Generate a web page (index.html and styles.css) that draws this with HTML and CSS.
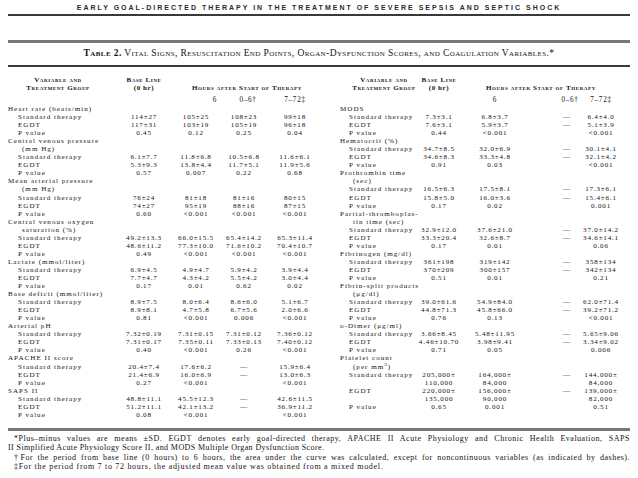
FILE: index.html
```html
<!DOCTYPE html>
<html>
<head>
<meta charset="utf-8">
<title>Table 2</title>
<link rel="stylesheet" href="styles.css">
</head>
<body>
<div class="page">
  <div class="running">Early Goal-Directed Therapy in the Treatment of Severe Sepsis and Septic Shock</div>
  <div class="rule-heavy"></div>
  <div class="caption"><b>Table 2.</b> Vital Signs, Resuscitation End Points, Organ-Dysfunction Scores, and Coagulation Variables.*</div>

  <div class="tables">
    <div class="tbl tleft">
      <div class="thead">
        <div class="h-var">Variable and<br>Treatment Group</div>
        <div class="h-base">Base Line<br><span class="nc">(0 hr)</span></div>
        <div class="h-hours">Hours after Start of Therapy</div>
        <div class="h-sub h6">6</div>
        <div class="h-sub h06">0–6†</div>
        <div class="h-sub h772">7–72‡</div>
      </div>
      <div class="tbody">
        <div class="row"><span class="lab grp">Heart rate (beats/min)</span></div>
        <div class="row"><span class="lab sub">Standard therapy</span><span>114±27</span><span>105±25</span><span>108±23</span><span>99±18</span></div>
        <div class="row"><span class="lab sub">EGDT</span><span>117±31</span><span>103±19</span><span>105±19</span><span>96±18</span></div>
        <div class="row"><span class="lab sub">P value</span><span>0.45</span><span>0.12</span><span>0.25</span><span>0.04</span></div>

        <div class="row"><span class="lab grp">Central venous pressure</span></div>
        <div class="row"><span class="lab cont">(mm Hg)</span></div>
        <div class="row"><span class="lab sub">Standard therapy</span><span>6.1±7.7</span><span>11.8±6.8</span><span>10.5±6.8</span><span>11.6±6.1</span></div>
        <div class="row"><span class="lab sub">EGDT</span><span>5.3±9.3</span><span>13.8±4.4</span><span>11.7±5.1</span><span>11.9±5.6</span></div>
        <div class="row"><span class="lab sub">P value</span><span>0.57</span><span>0.007</span><span>0.22</span><span>0.68</span></div>

        <div class="row"><span class="lab grp">Mean arterial pressure</span></div>
        <div class="row"><span class="lab cont">(mm Hg)</span></div>
        <div class="row"><span class="lab sub">Standard therapy</span><span>76±24</span><span>81±18</span><span>81±16</span><span>80±15</span></div>
        <div class="row"><span class="lab sub">EGDT</span><span>74±27</span><span>95±19</span><span>88±16</span><span>87±15</span></div>
        <div class="row"><span class="lab sub">P value</span><span>0.60</span><span>&lt;0.001</span><span>&lt;0.001</span><span>&lt;0.001</span></div>

        <div class="row"><span class="lab grp">Central venous oxygen</span></div>
        <div class="row"><span class="lab cont">saturation (%)</span></div>
        <div class="row"><span class="lab sub">Standard therapy</span><span>49.2±13.3</span><span>66.0±15.5</span><span>65.4±14.2</span><span>65.3±11.4</span></div>
        <div class="row"><span class="lab sub">EGDT</span><span>48.6±11.2</span><span>77.3±10.0</span><span>71.6±10.2</span><span>70.4±10.7</span></div>
        <div class="row"><span class="lab sub">P value</span><span>0.49</span><span>&lt;0.001</span><span>&lt;0.001</span><span>&lt;0.001</span></div>

        <div class="row"><span class="lab grp">Lactate (mmol/liter)</span></div>
        <div class="row"><span class="lab sub">Standard therapy</span><span>6.9±4.5</span><span>4.9±4.7</span><span>5.9±4.2</span><span>3.9±4.4</span></div>
        <div class="row"><span class="lab sub">EGDT</span><span>7.7±4.7</span><span>4.3±4.2</span><span>5.5±4.2</span><span>3.0±4.4</span></div>
        <div class="row"><span class="lab sub">P value</span><span>0.17</span><span>0.01</span><span>0.62</span><span>0.02</span></div>

        <div class="row"><span class="lab grp">Base deficit (mmol/liter)</span></div>
        <div class="row"><span class="lab sub">Standard therapy</span><span>8.9±7.5</span><span>8.0±6.4</span><span>8.6±6.0</span><span>5.1±6.7</span></div>
        <div class="row"><span class="lab sub">EGDT</span><span>8.9±8.1</span><span>4.7±5.8</span><span>6.7±5.6</span><span>2.0±6.6</span></div>
        <div class="row"><span class="lab sub">P value</span><span>0.81</span><span>&lt;0.001</span><span>0.006</span><span>&lt;0.001</span></div>

        <div class="row"><span class="lab grp">Arterial pH</span></div>
        <div class="row"><span class="lab sub">Standard therapy</span><span>7.32±0.19</span><span>7.31±0.15</span><span>7.31±0.12</span><span>7.36±0.12</span></div>
        <div class="row"><span class="lab sub">EGDT</span><span>7.31±0.17</span><span>7.35±0.11</span><span>7.33±0.13</span><span>7.40±0.12</span></div>
        <div class="row"><span class="lab sub">P value</span><span>0.40</span><span>&lt;0.001</span><span>0.26</span><span>&lt;0.001</span></div>

        <div class="row"><span class="lab grp">APACHE II score</span></div>
        <div class="row"><span class="lab sub">Standard therapy</span><span>20.4±7.4</span><span>17.6±6.2</span><span>—</span><span>15.9±6.4</span></div>
        <div class="row"><span class="lab sub">EGDT</span><span>21.4±6.9</span><span>16.0±6.9</span><span>—</span><span>13.0±6.3</span></div>
        <div class="row"><span class="lab sub">P value</span><span>0.27</span><span>&lt;0.001</span><span></span><span>&lt;0.001</span></div>

        <div class="row"><span class="lab grp">SAPS II</span></div>
        <div class="row"><span class="lab sub">Standard therapy</span><span>48.8±11.1</span><span>45.5±12.3</span><span>—</span><span>42.6±11.5</span></div>
        <div class="row"><span class="lab sub">EGDT</span><span>51.2±11.1</span><span>42.1±13.2</span><span>—</span><span>36.9±11.2</span></div>
        <div class="row"><span class="lab sub">P value</span><span>0.08</span><span>&lt;0.001</span><span></span><span>&lt;0.001</span></div>
      </div>
    </div>

    <div class="tbl tright">
      <div class="thead">
        <div class="h-var">Variable and<br>Treatment Group</div>
        <div class="h-base">Base Line<br><span class="nc">(0 hr)</span></div>
        <div class="h-hours">Hours after Start of Therapy</div>
        <div class="h-sub h6">6</div>
        <div class="h-sub h06">0–6†</div>
        <div class="h-sub h772">7–72‡</div>
      </div>
      <div class="tbody">
        <div class="row"><span class="lab grp">MODS</span></div>
        <div class="row"><span class="lab sub">Standard therapy</span><span>7.3±3.1</span><span>6.8±3.7</span><span>—</span><span>6.4±4.0</span></div>
        <div class="row"><span class="lab sub">EGDT</span><span>7.6±3.1</span><span>5.9±3.7</span><span>—</span><span>5.1±3.9</span></div>
        <div class="row"><span class="lab sub">P value</span><span>0.44</span><span>&lt;0.001</span><span></span><span>&lt;0.001</span></div>

        <div class="row"><span class="lab grp">Hematocrit (%)</span></div>
        <div class="row"><span class="lab sub">Standard therapy</span><span>34.7±8.5</span><span>32.0±6.9</span><span>—</span><span>30.1±4.1</span></div>
        <div class="row"><span class="lab sub">EGDT</span><span>34.6±8.3</span><span>33.3±4.8</span><span>—</span><span>32.1±4.2</span></div>
        <div class="row"><span class="lab sub">P value</span><span>0.91</span><span>0.03</span><span></span><span>&lt;0.001</span></div>

        <div class="row"><span class="lab grp">Prothrombin time</span></div>
        <div class="row"><span class="lab cont">(sec)</span></div>
        <div class="row"><span class="lab sub">Standard therapy</span><span>16.5±6.3</span><span>17.5±8.1</span><span>—</span><span>17.3±6.1</span></div>
        <div class="row"><span class="lab sub">EGDT</span><span>15.8±5.0</span><span>16.0±3.6</span><span>—</span><span>15.4±6.1</span></div>
        <div class="row"><span class="lab sub">P value</span><span>0.17</span><span>0.02</span><span></span><span>0.001</span></div>

        <div class="row"><span class="lab grp">Partial-thromboplas-</span></div>
        <div class="row"><span class="lab cont">tin time (sec)</span></div>
        <div class="row"><span class="lab sub">Standard therapy</span><span>32.9±12.0</span><span>37.6±21.0</span><span>—</span><span>37.0±14.2</span></div>
        <div class="row"><span class="lab sub">EGDT</span><span>33.3±20.4</span><span>32.6±8.7</span><span>—</span><span>34.6±14.1</span></div>
        <div class="row"><span class="lab sub">P value</span><span>0.17</span><span>0.01</span><span></span><span>0.06</span></div>

        <div class="row"><span class="lab grp">Fibrinogen (mg/dl)</span></div>
        <div class="row"><span class="lab sub">Standard therapy</span><span>361±198</span><span>319±142</span><span>—</span><span>358±134</span></div>
        <div class="row"><span class="lab sub">EGDT</span><span>370±209</span><span>300±157</span><span>—</span><span>342±134</span></div>
        <div class="row"><span class="lab sub">P value</span><span>0.51</span><span>0.01</span><span></span><span>0.21</span></div>

        <div class="row"><span class="lab grp">Fibrin-split products</span></div>
        <div class="row"><span class="lab cont">(μg/dl)</span></div>
        <div class="row"><span class="lab sub">Standard therapy</span><span>39.0±61.6</span><span>54.9±84.0</span><span>—</span><span>62.0±71.4</span></div>
        <div class="row"><span class="lab sub">EGDT</span><span>44.8±71.3</span><span>45.8±66.0</span><span>—</span><span>39.2±71.2</span></div>
        <div class="row"><span class="lab sub">P value</span><span>0.76</span><span>0.13</span><span></span><span>&lt;0.001</span></div>

        <div class="row"><span class="lab grp"><span class="sc">d</span>-Dimer (μg/ml)</span></div>
        <div class="row"><span class="lab sub">Standard therapy</span><span>3.66±8.45</span><span>5.48±11.95</span><span>—</span><span>5.65±9.06</span></div>
        <div class="row"><span class="lab sub">EGDT</span><span>4.46±10.70</span><span>3.98±9.41</span><span>—</span><span>3.34±9.02</span></div>
        <div class="row"><span class="lab sub">P value</span><span>0.71</span><span>0.05</span><span></span><span>0.006</span></div>

        <div class="row"><span class="lab grp">Platelet count</span></div>
        <div class="row"><span class="lab cont">(per mm<sup>3</sup>)</span></div>
        <div class="row"><span class="lab sub">Standard therapy</span><span>205,000±</span><span>164,000±</span><span>—</span><span>144,000±</span></div>
        <div class="row"><span class="lab"></span><span>110,000</span><span>84,000</span><span></span><span>84,000</span></div>
        <div class="row"><span class="lab sub">EGDT</span><span>220,000±</span><span>156,000±</span><span>—</span><span>139,000±</span></div>
        <div class="row"><span class="lab"></span><span>135,000</span><span>90,000</span><span></span><span>82,000</span></div>
        <div class="row"><span class="lab sub">P value</span><span>0.65</span><span>0.001</span><span></span><span>0.51</span></div>
      </div>
    </div>
  </div>

  <div class="rule-heavy bottom"></div>

  <div class="notes">
    <p class="jl ind n1">*Plus–minus values are means ±SD. EGDT denotes early goal-directed therapy, APACHE II Acute Physiology and Chronic Health Evaluation, SAPS</p>
    <p class="n2">II Simplified Acute Physiology Score II, and MODS Multiple Organ Dysfunction Score.</p>
    <p class="jl ind gap n3">†For the period from base line (0 hours) to 6 hours, the area under the curve was calculated, except for noncontinuous variables (as indicated by dashes).</p>
    <p class="ind n4">‡For the period from 7 to 72 hours, the adjusted mean value was obtained from a mixed model.</p>
  </div>
</div>
</body>
</html>
```

FILE: styles.css
```css
html, body {
  margin: 0;
  padding: 0;
  background: #ffffff;
}

body {
  width: 638px;
  height: 478px;
  overflow: hidden;
  color: #141414;
  font-family: "Liberation Serif", "Times New Roman", serif;
}

.page {
  padding: 0 8px;
}

.running {
  font-family: "Liberation Sans", Arial, sans-serif;
  font-weight: bold;
  font-size: 7px;
  line-height: 9px;
  letter-spacing: 2px;
  text-transform: uppercase;
  text-align: center;
  color: #2a2a2a;
  padding-top: 3px;
  padding-bottom: 2px;
  border-bottom: 2px solid #3a3a3a;
}

.rule-heavy {
  height: 3px;
  background: #777777;
  margin-top: 24px;
}

.rule-heavy.bottom {
  margin-top: 9px;
}

.caption {
  font-size: 9.5px;
  line-height: 12px;
  font-variant: small-caps;
  letter-spacing: 0.4px;
  text-align: center;
  margin-top: 4px;
  padding-bottom: 6px;
  border-bottom: 2px solid #3a3a3a;
}

.tables {
  display: flex;
}

.tleft {
  width: 316px;
  margin-right: 16px;
  --cols: 110px 52px 52px 44px 58px;
}

.tright {
  width: 282px;
  --cols: 78px 42px 70px 50px 42px;
}

.thead {
  display: grid;
  grid-template-columns: var(--cols);
  grid-template-rows: 8px 8px 8px;
  padding-top: 9px;
  font-size: 7px;
  line-height: 8px;
  font-weight: bold;
  font-variant: small-caps;
  letter-spacing: 0.6px;
  text-align: center;
  white-space: nowrap;
}

.h-var {
  grid-column: 1;
  grid-row: 1 / 3;
}

.tleft .h-var {
  padding-right: 10px;
}

.tright .h-var {
  padding-left: 10px;
}

.h-base {
  grid-column: 2;
  grid-row: 1 / 3;
}

.nc {
  font-variant: normal;
}

.h-hours {
  grid-column: 3 / 6;
  grid-row: 2;
}

.h-sub {
  grid-row: 3;
  margin-top: 4px;
  font-weight: normal;
  font-variant: normal;
  font-size: 7.2px;
  letter-spacing: 0.7px;
}

.h6 { grid-column: 3; }
.h06 { grid-column: 4; }
.h772 { grid-column: 5; }

.tleft .h6 { padding-left: 38px; }
.tleft .h06 { padding-left: 8px; }
.tright .h06 { padding-left: 30px; }

.tbody {
  padding-top: 5px;
}

.row {
  display: grid;
  grid-template-columns: var(--cols);
  height: 8.05px;
  font-size: 7.1px;
  line-height: 8.05px;
  letter-spacing: 0.8px;
  white-space: nowrap;
}

.row > span {
  text-align: center;
}

.row > .lab {
  text-align: left;
  letter-spacing: 1px;
}

.lab.sub {
  padding-left: 10px;
}

.lab.cont {
  padding-left: 14px;
}

.tright .lab.sub {
  padding-left: 9px;
}

.tright .lab.cont {
  padding-left: 13px;
}

.tright .row > span:nth-child(4) {
  padding-left: 24px;
}

.sc {
  font-variant: small-caps;
}

sup {
  font-size: 5px;
  line-height: 0;
  vertical-align: 3px;
}

.notes {
  margin-top: 3px;
  font-size: 8px;
  line-height: 9px;
  letter-spacing: 0.5px;
}

.notes p {
  margin: 0;
  white-space: normal;
}

.notes .ind {
  text-indent: 6px;
}

.notes .jl {
  text-align: justify;
  text-align-last: justify;
}

.notes .gap {
  margin-top: 1px;
}

.notes .n2 {
  letter-spacing: 0.4px;
}

.notes .n4 {
  letter-spacing: 0.7px;
}
```
